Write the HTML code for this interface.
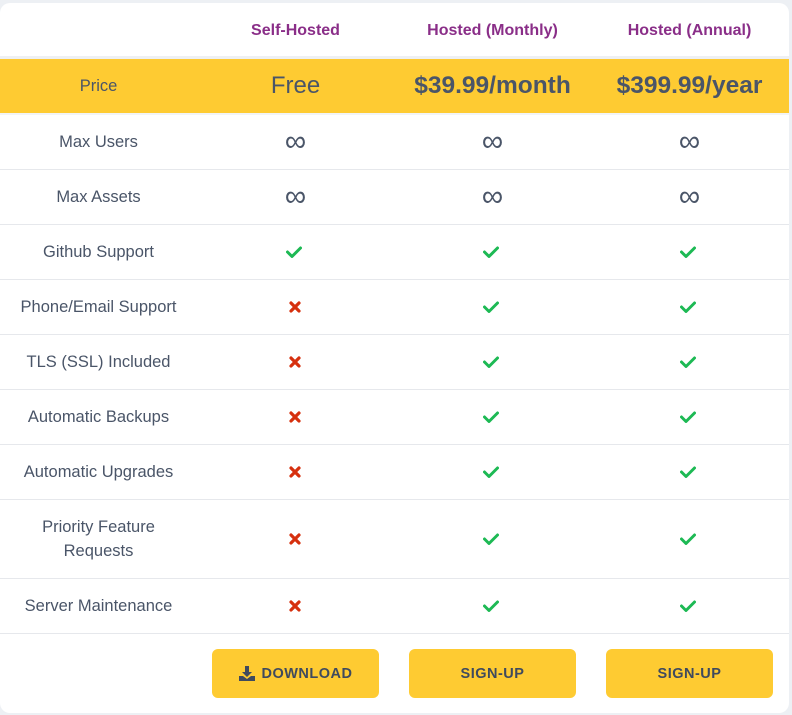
<!DOCTYPE html>
<html><head><meta charset="utf-8"><style>
*{margin:0;padding:0;box-sizing:border-box}
body{width:792px;height:715px;background:#edf0f4;font-family:"Liberation Sans","DejaVu Sans",sans-serif;color:#4a5568;position:relative;overflow:hidden}
.card{position:absolute;left:0;top:3px;width:789px;height:710px;background:#fff;border-radius:10px;overflow:hidden}
.row{position:absolute;left:0;width:789px;border-bottom:1px solid #e6e8ec;display:flex;align-items:center}
.c{width:197px;text-align:center;display:flex;justify-content:center;align-items:center;font-size:16.5px}
.hd{font-weight:bold;color:#8a2e88;font-size:16px}
.price{background:#fecb32;border-bottom:2px solid #f2f4f6}
.inf{font-size:30px;color:#4a5568;line-height:1}
.btn{width:167px;height:49px;background:#fecb32;border-radius:6px;font-weight:bold;font-size:14.5px;color:#3f4a5e;display:flex;align-items:center;justify-content:center;letter-spacing:.5px}
</style></head><body>
<div class="card">
<div class="row" style="top:0;height:56px;border-bottom:3px solid #eef0f3;padding-top:3px"><div class="c"></div><div class="c hd">Self-Hosted</div><div class="c hd">Hosted (Monthly)</div><div class="c hd">Hosted (Annual)</div></div>
<div class="row price" style="top:56px;height:56px"><div class="c">Price</div><div class="c" style="font-size:24px">Free</div><div class="c" style="font-size:24.5px;font-weight:bold">$39.99/month</div><div class="c" style="font-size:24.5px;font-weight:bold">$399.99/year</div></div>
<div class="row" style="top:112px;height:55px"><div class="c">Max Users</div><div class="c inf">∞</div><div class="c inf">∞</div><div class="c inf">∞</div></div>
<div class="row" style="top:167px;height:55px"><div class="c">Max Assets</div><div class="c inf">∞</div><div class="c inf">∞</div><div class="c inf">∞</div></div>
<div class="row" style="top:222px;height:55px"><div class="c">Github Support</div><div class="c">Y</div><div class="c">Y</div><div class="c">Y</div></div>
<div class="row" style="top:277px;height:55px"><div class="c">Phone/Email Support</div><div class="c">N</div><div class="c">Y</div><div class="c">Y</div></div>
<div class="row" style="top:332px;height:55px"><div class="c">TLS (SSL) Included</div><div class="c">N</div><div class="c">Y</div><div class="c">Y</div></div>
<div class="row" style="top:387px;height:55px"><div class="c">Automatic Backups</div><div class="c">N</div><div class="c">Y</div><div class="c">Y</div></div>
<div class="row" style="top:442px;height:55px"><div class="c">Automatic Upgrades</div><div class="c">N</div><div class="c">Y</div><div class="c">Y</div></div>
<div class="row" style="top:497px;height:79px"><div class="c" style="line-height:24px">Priority Feature<br>Requests</div><div class="c">N</div><div class="c">Y</div><div class="c">Y</div></div>
<div class="row" style="top:576px;height:55px"><div class="c">Server Maintenance</div><div class="c">N</div><div class="c">Y</div><div class="c">Y</div></div>
<div class="row" style="top:631px;height:79px;border:none"><div class="c"></div><div class="c"><div class="btn"><svg width="16" height="15" viewBox="0 0 16 15" style="margin-right:7px"><path d="M6 0h4v6h3l-5 5-5-5h3z" fill="#3f4a5e"/><path d="M0 10h4l4 3 4-3h4v5H0z" fill="#3f4a5e"/></svg>DOWNLOAD</div></div><div class="c"><div class="btn">SIGN-UP</div></div><div class="c"><div class="btn">SIGN-UP</div></div></div>
</div>
<script>
document.querySelectorAll('.c').forEach(e=>{
if(e.textContent==='Y')e.innerHTML='<svg width="16" height="12" viewBox="0 0 16 12" style="margin-left:-3px"><path d="M1.5 6l4.5 4.5L14.5 2" stroke="#1db954" stroke-width="3" fill="none" stroke-linecap="round" stroke-linejoin="round"/></svg>';
if(e.textContent==='N')e.innerHTML='<svg width="12" height="12" viewBox="0 0 12 12" style="margin-left:-2px"><path d="M2 2l8 8M10 2l-8 8" stroke="#d6300e" stroke-width="3.2" stroke-linecap="round"/></svg>';
});
</script>
</body></html>
